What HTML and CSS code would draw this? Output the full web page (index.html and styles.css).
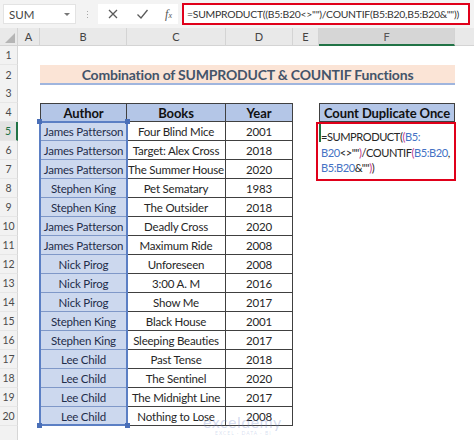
FILE: index.html
```html
<!DOCTYPE html>
<html>
<head>
<meta charset="utf-8">
<link rel="stylesheet" href="styles.css">
</head>
<body>
<div class="toolbar">
  <div class="namebox"><span>SUM</span><span class="caret"></span></div>
  <div class="grip"><span></span><span></span><span></span></div>
  <div class="fxbox">
    <svg class="ico" width="12" height="12" viewBox="0 0 12 12"><path d="M2 2 L10 10 M10 2 L2 10" stroke="#5a5a5a" stroke-width="1.3" fill="none"/></svg>
    <svg class="ico" width="13" height="12" viewBox="0 0 13 12"><path d="M1.5 6.5 L5 10 L11.5 2" stroke="#5a5a5a" stroke-width="1.3" fill="none"/></svg>
    <span class="fx"><i>f</i><span class="fxs">x</span></span>
  </div>
  <div class="formula">=SUMPRODUCT((B5:B20&lt;&gt;"")/COUNTIF(B5:B20,B5:B20&amp;""))</div>
</div>

<div class="sheet">
  <div class="row colhead">
    <div class="corner"><svg width="10" height="10" viewBox="0 0 10 10"><polygon points="10,0 10,10 0,10" fill="#b5b5b5"/></svg></div>
    <div class="ch">A</div>
    <div class="ch">B</div>
    <div class="ch">C</div>
    <div class="ch">D</div>
    <div class="ch">E</div>
    <div class="ch active">F</div>
    <div class="ch last"></div>
  </div>

  <div class="row"><div class="rh">1</div></div>
  <div class="row"><div class="rh">2</div><div class="title">Combination of SUMPRODUCT &amp; COUNTIF Functions</div></div>
  <div class="row"><div class="rh">3</div></div>
  <div class="row">
    <div class="rh">4</div>
    <div class="td th cB first">Author</div>
    <div class="td th cC">Books</div>
    <div class="td th cD">Year</div>
    <div class="td th cF first">Count Duplicate Once</div>
  </div>
  <div class="row">
    <div class="rh act">5</div>
    <div class="td cB first au sel-anchor">James Patterson<div class="sel-range"><i class="h tl"></i><i class="h tr"></i><i class="h bl"></i><i class="h br"></i></div></div>
    <div class="td cC">Four Blind Mice</div>
    <div class="td cD">2001</div>
    <div class="cF edit-anchor">
      <div class="editor"><span class="cur"></span>=SUMPRODUCT(<span class="p">(</span><span class="r">B5:</span><br><span class="r">B20</span>&lt;&gt;""<span class="p">)</span>/COUNTIF<span class="p">(</span><span class="r">B5:B20</span>,<br><span class="r">B5:B20</span>&amp;""<span class="p">)</span>)</div>
    </div>
  </div>
  <div class="row"><div class="rh">6</div><div class="td cB first au">James Patterson</div><div class="td cC">Target: Alex Cross</div><div class="td cD">2018</div></div>
  <div class="row"><div class="rh">7</div><div class="td cB first au">James Patterson</div><div class="td cC">The Summer House</div><div class="td cD">2020</div></div>
  <div class="row"><div class="rh">8</div><div class="td cB first au">Stephen King</div><div class="td cC">Pet Sematary</div><div class="td cD">1983</div></div>
  <div class="row"><div class="rh">9</div><div class="td cB first au">Stephen King</div><div class="td cC">The Outsider</div><div class="td cD">2018</div></div>
  <div class="row"><div class="rh">10</div><div class="td cB first au">James Patterson</div><div class="td cC">Deadly Cross</div><div class="td cD">2020</div></div>
  <div class="row"><div class="rh">11</div><div class="td cB first au">James Patterson</div><div class="td cC">Maximum Ride</div><div class="td cD">2008</div></div>
  <div class="row"><div class="rh">12</div><div class="td cB first au">Nick Pirog</div><div class="td cC">Unforeseen</div><div class="td cD">2008</div></div>
  <div class="row"><div class="rh">13</div><div class="td cB first au">Nick Pirog</div><div class="td cC">3:00 A. M</div><div class="td cD">2016</div></div>
  <div class="row"><div class="rh">14</div><div class="td cB first au">Nick Pirog</div><div class="td cC">Show Me</div><div class="td cD">2017</div></div>
  <div class="row"><div class="rh">15</div><div class="td cB first au">Stephen King</div><div class="td cC">Black House</div><div class="td cD">2001</div></div>
  <div class="row"><div class="rh">16</div><div class="td cB first au">Stephen King</div><div class="td cC">Sleeping Beauties</div><div class="td cD">2017</div></div>
  <div class="row"><div class="rh">17</div><div class="td cB first au">Lee Child</div><div class="td cC">Past Tense</div><div class="td cD">2018</div></div>
  <div class="row"><div class="rh">18</div><div class="td cB first au">Lee Child</div><div class="td cC">The Sentinel</div><div class="td cD">2020</div></div>
  <div class="row"><div class="rh">19</div><div class="td cB first au">Lee Child</div><div class="td cC">The Midnight Line</div><div class="td cD">2017</div></div>
  <div class="row"><div class="rh">20</div><div class="td cB first au">Lee Child</div><div class="td cC">Nothing to Lose</div><div class="td cD">2008</div></div>
  <div class="row"><div class="rh"></div></div>

  <div class="watermark">exceldemy<span class="wm-sub">EXCEL · DATA · BI</span></div>
</div>
</body>
</html>
```

FILE: styles.css
```css
* { box-sizing: border-box; }
body {
  margin: 0;
  width: 474px;
  height: 440px;
  overflow: hidden;
  background: #ffffff;
  font-family: Lato, "Liberation Sans", sans-serif;
  color: #262626;
}

/* ---------- formula toolbar ---------- */
.toolbar {
  height: 28px;
  background: #f3f3f3;
  display: flex;
  align-items: center;
  padding-left: 3px;
}
.namebox {
  width: 73px;
  height: 20px;
  background: #fff;
  border: 1px solid #e3e3e3;
  display: flex;
  align-items: center;
  justify-content: space-between;
  padding: 0 5px 0 5px;
  font-size: 11.5px;
  color: #444;
}
.caret {
  width: 0;
  height: 0;
  border-left: 3px solid transparent;
  border-right: 3px solid transparent;
  border-top: 3px solid #777;
}
.grip {
  width: 22px;
  height: 20px;
  display: flex;
  flex-direction: column;
  align-items: center;
  justify-content: center;
  gap: 2px;
}
.grip span {
  width: 1px;
  height: 1px;
  background: #a8a8a8;
}
.fxbox {
  width: 80px;
  height: 20px;
  background: #fff;
  display: flex;
  align-items: center;
  justify-content: space-between;
  padding: 0 6px 0 9px;
}
.ico { display: block; }
.fx {
  font-family: "Liberation Serif", serif;
  font-size: 12px;
  color: #555;
}
.fxs { font-size: 8px; font-style: italic; }
.formula {
  margin-left: 4px;
  width: 288px;
  height: 22px;
  background: #fff;
  border: 2px solid #e0001a;
  display: flex;
  align-items: center;
  padding-left: 3px;
  font-size: 10.4px;
  letter-spacing: -0.25px;
  color: #333;
  white-space: nowrap;
  overflow: hidden;
}

/* ---------- sheet grid ---------- */
.sheet { position: relative; }
.row {
  display: grid;
  grid-template-columns: 18px 22px 87px 99px 67px 26px 136px 1fr;
  height: 19px;
}
.colhead { height: 18px; background: #e9e9e9; }
.corner {
  display: flex;
  align-items: flex-end;
  justify-content: flex-end;
  padding: 0 2px 2px 0;
  border-right: 1px solid #d4d4d4;
  border-bottom: 1px solid #d4d4d4;
}
.ch {
  display: flex;
  align-items: center;
  justify-content: center;
  font-size: 11px;
  color: #444;
  border-right: 1px solid #d4d4d4;
  border-bottom: 1px solid #d4d4d4;
}
.ch.active {
  background: #d6d6d6;
  border-bottom: 2px solid #217346;
  color: #555;
}
.ch.last { border-right: none; }

.rh {
  grid-column: 1;
  display: flex;
  align-items: center;
  justify-content: center;
  font-size: 10.5px;
  color: #4a4a4a;
  background: #f2f2f2;
  border-right: 1px solid #d6d6d6;
  border-bottom: 1px solid #e6e6e6;
}
.rh.act {
  background: #e2e2e2;
  color: #217346;
  border-right: 2px solid #217346;
}

.cB { grid-column: 3; }
.cC { grid-column: 4; }
.cD { grid-column: 5; }
.cF { grid-column: 7; }

.title {
  grid-column: 3 / 8;
  background: #fbe4d6;
  border-bottom: 2px solid #9fb5de;
  display: flex;
  align-items: center;
  justify-content: center;
  font-weight: bold;
  font-size: 14px;
  letter-spacing: -0.2px;
  color: #44546a;
  height: 20px;
}

.td {
  display: flex;
  align-items: center;
  justify-content: center;
  font-size: 11.5px;
  letter-spacing: -0.2px;
  color: #262626;
  white-space: nowrap;
  border-right: 1px solid #404040;
  border-bottom: 1px solid #404040;
}
.td.first { border-left: 1px solid #404040; }
.th {
  border-top: 1px solid #404040;
  background: #b4c6e7;
  font-weight: bold;
  font-size: 13px;
  letter-spacing: -0.1px;
  color: #111;
}
.au {
  background: #ccd8ee;
  color: #1f2d4a;
  border-bottom-color: #7f98c8;
}

/* selected range overlay (B5:B20) */
.sel-anchor { position: relative; }
.sel-range {
  position: absolute;
  left: -2px;
  top: -1px;
  width: 89px;
  height: 305px;
  border: 2px solid #5b7fc4;
  pointer-events: none;
}
.h {
  position: absolute;
  width: 5px;
  height: 5px;
  background: #4a6fb8;
}
.h.tl { left: -4px; top: -4px; }
.h.tr { right: -4px; top: -4px; }
.h.bl { left: -4px; bottom: -4px; }
.h.br { right: -4px; bottom: -4px; }

/* in-cell editor F5 */
.edit-anchor { position: relative; }
.editor {
  position: absolute;
  left: -3px;
  top: 0;
  width: 140px;
  height: 59px;
  background: #fff;
  border: 2px solid #e0001a;
  padding: 5px 0 0 3px;
  font-size: 11.1px;
  letter-spacing: -0.45px;
  line-height: 15.5px;
  color: #262626;
  white-space: nowrap;
  z-index: 2;
}
.cur {
  position: absolute;
  left: 1px;
  top: 0;
  width: 2px;
  height: 18px;
  background: #217346;
}
.r { color: #4472c4; }
.p { color: #c2378f; }

.watermark {
  position: absolute;
  left: 203px;
  top: 386px;
  font-size: 16px;
  color: rgba(110, 135, 200, 0.3);
  letter-spacing: 0.5px;
  line-height: 16px;
  pointer-events: none;
}
.wm-sub {
  display: block;
  font-size: 5px;
  line-height: 6px;
  letter-spacing: 1px;
  color: rgba(110, 135, 200, 0.28);
  padding-left: 12px;
}
```
